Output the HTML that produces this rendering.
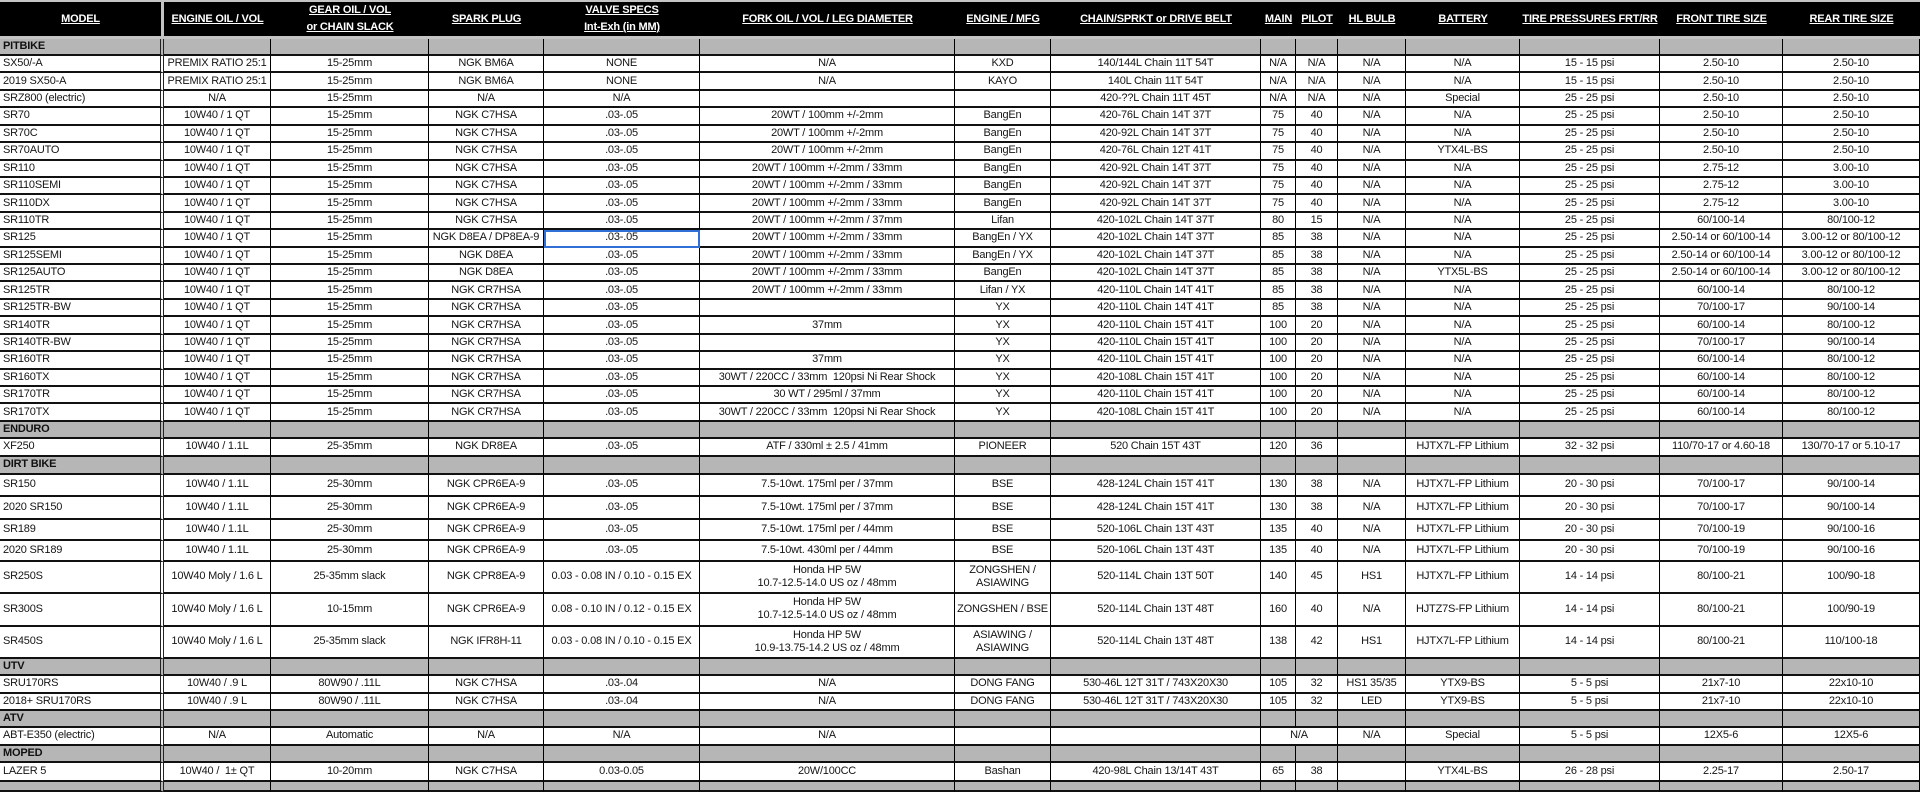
<!DOCTYPE html>
<html><head><meta charset="utf-8">
<style>
html,body{margin:0;padding:0;background:#fff;}
body{width:1920px;height:784px;overflow:hidden;font-family:"Liberation Sans",Arial,sans-serif;font-size:11px;color:#151515;letter-spacing:-0.2px;}
.g{display:grid;width:1920px;
grid-template-columns:164px 107px 158px 115px 156px 255px 96px 210px 35px 42px 68px 114px 140px 123px 137px;
grid-template-rows:39px 17px repeat(21,17.43px) 17px 18px 18px 22px 23px 21px 21px 32px 33px 32px 17px 18px 17px 17px 18px 17px 19px 10px;}
.r{display:contents}
.r>div{box-sizing:border-box;border-right:1px solid #000;border-bottom:2px solid #111;display:flex;align-items:center;justify-content:center;text-align:center;white-space:nowrap;overflow:hidden;line-height:13px;}
.r>div:first-child{justify-content:flex-start;padding-left:3px;border-right:4px double #222;}
.s>div{background:#b6b6b6;font-weight:bold;color:#111}
.h>div{background:#000;color:#fff;font-weight:bold;text-decoration:underline;border:none;border-top:2px solid #c4c4c4;border-bottom:3px solid #c4c4c4;line-height:17px;}
.h>div:first-child{justify-content:center;padding:0;border-right:3px solid #c4c4c4;}
.sel{outline:2px solid #2f6fd6;outline-offset:-2px}
.f>div{background:#b6b6b6}
</style></head><body>
<div class="g">
<div class="r h"><div>MODEL</div><div>ENGINE OIL / VOL</div><div>GEAR OIL / VOL<br>or CHAIN SLACK</div><div>SPARK PLUG</div><div>VALVE SPECS<br>Int-Exh (in MM)</div><div>FORK OIL / VOL / LEG DIAMETER</div><div>ENGINE / MFG</div><div>CHAIN/SPRKT or DRIVE BELT</div><div>MAIN</div><div>PILOT</div><div>HL BULB</div><div>BATTERY</div><div>TIRE PRESSURES FRT/RR</div><div>FRONT TIRE SIZE</div><div>REAR TIRE SIZE</div></div>

<div class="r s"><div>PITBIKE</div><div></div><div></div><div></div><div></div><div></div><div></div><div></div><div></div><div></div><div></div><div></div><div></div><div></div><div></div></div>
<div class="r"><div>SX50/-A</div><div>PREMIX RATIO 25:1</div><div>15-25mm</div><div>NGK BM6A</div><div>NONE</div><div>N/A</div><div>KXD</div><div>140/144L Chain 11T 54T</div><div>N/A</div><div>N/A</div><div>N/A</div><div>N/A</div><div>15 - 15 psi</div><div>2.50-10</div><div>2.50-10</div></div>
<div class="r"><div>2019 SX50-A</div><div>PREMIX RATIO 25:1</div><div>15-25mm</div><div>NGK BM6A</div><div>NONE</div><div>N/A</div><div>KAYO</div><div>140L Chain 11T 54T</div><div>N/A</div><div>N/A</div><div>N/A</div><div>N/A</div><div>15 - 15 psi</div><div>2.50-10</div><div>2.50-10</div></div>
<div class="r"><div>SRZ800 (electric)</div><div>N/A</div><div>15-25mm</div><div>N/A</div><div>N/A</div><div></div><div></div><div>420-??L Chain 11T 45T</div><div>N/A</div><div>N/A</div><div>N/A</div><div>Special</div><div>25 - 25 psi</div><div>2.50-10</div><div>2.50-10</div></div>
<div class="r"><div>SR70</div><div>10W40 / 1 QT</div><div>15-25mm</div><div>NGK C7HSA</div><div>.03-.05</div><div>20WT / 100mm +/-2mm</div><div>BangEn</div><div>420-76L Chain 14T 37T</div><div>75</div><div>40</div><div>N/A</div><div>N/A</div><div>25 - 25 psi</div><div>2.50-10</div><div>2.50-10</div></div>
<div class="r"><div>SR70C</div><div>10W40 / 1 QT</div><div>15-25mm</div><div>NGK C7HSA</div><div>.03-.05</div><div>20WT / 100mm +/-2mm</div><div>BangEn</div><div>420-92L Chain 14T 37T</div><div>75</div><div>40</div><div>N/A</div><div>N/A</div><div>25 - 25 psi</div><div>2.50-10</div><div>2.50-10</div></div>
<div class="r"><div>SR70AUTO</div><div>10W40 / 1 QT</div><div>15-25mm</div><div>NGK C7HSA</div><div>.03-.05</div><div>20WT / 100mm +/-2mm</div><div>BangEn</div><div>420-76L Chain 12T 41T</div><div>75</div><div>40</div><div>N/A</div><div>YTX4L-BS</div><div>25 - 25 psi</div><div>2.50-10</div><div>2.50-10</div></div>
<div class="r"><div>SR110</div><div>10W40 / 1 QT</div><div>15-25mm</div><div>NGK C7HSA</div><div>.03-.05</div><div>20WT / 100mm +/-2mm / 33mm</div><div>BangEn</div><div>420-92L Chain 14T 37T</div><div>75</div><div>40</div><div>N/A</div><div>N/A</div><div>25 - 25 psi</div><div>2.75-12</div><div>3.00-10</div></div>
<div class="r"><div>SR110SEMI</div><div>10W40 / 1 QT</div><div>15-25mm</div><div>NGK C7HSA</div><div>.03-.05</div><div>20WT / 100mm +/-2mm / 33mm</div><div>BangEn</div><div>420-92L Chain 14T 37T</div><div>75</div><div>40</div><div>N/A</div><div>N/A</div><div>25 - 25 psi</div><div>2.75-12</div><div>3.00-10</div></div>
<div class="r"><div>SR110DX</div><div>10W40 / 1 QT</div><div>15-25mm</div><div>NGK C7HSA</div><div>.03-.05</div><div>20WT / 100mm +/-2mm / 33mm</div><div>BangEn</div><div>420-92L Chain 14T 37T</div><div>75</div><div>40</div><div>N/A</div><div>N/A</div><div>25 - 25 psi</div><div>2.75-12</div><div>3.00-10</div></div>
<div class="r"><div>SR110TR</div><div>10W40 / 1 QT</div><div>15-25mm</div><div>NGK C7HSA</div><div>.03-.05</div><div>20WT / 100mm +/-2mm / 37mm</div><div>Lifan</div><div>420-102L Chain 14T 37T</div><div>80</div><div>15</div><div>N/A</div><div>N/A</div><div>25 - 25 psi</div><div>60/100-14</div><div>80/100-12</div></div>
<div class="r"><div>SR125</div><div>10W40 / 1 QT</div><div>15-25mm</div><div>NGK D8EA / DP8EA-9</div><div class="sel">.03-.05</div><div>20WT / 100mm +/-2mm / 33mm</div><div>BangEn / YX</div><div>420-102L Chain 14T 37T</div><div>85</div><div>38</div><div>N/A</div><div>N/A</div><div>25 - 25 psi</div><div>2.50-14 or 60/100-14</div><div>3.00-12 or 80/100-12</div></div>
<div class="r"><div>SR125SEMI</div><div>10W40 / 1 QT</div><div>15-25mm</div><div>NGK D8EA</div><div>.03-.05</div><div>20WT / 100mm +/-2mm / 33mm</div><div>BangEn / YX</div><div>420-102L Chain 14T 37T</div><div>85</div><div>38</div><div>N/A</div><div>N/A</div><div>25 - 25 psi</div><div>2.50-14 or 60/100-14</div><div>3.00-12 or 80/100-12</div></div>
<div class="r"><div>SR125AUTO</div><div>10W40 / 1 QT</div><div>15-25mm</div><div>NGK D8EA</div><div>.03-.05</div><div>20WT / 100mm +/-2mm / 33mm</div><div>BangEn</div><div>420-102L Chain 14T 37T</div><div>85</div><div>38</div><div>N/A</div><div>YTX5L-BS</div><div>25 - 25 psi</div><div>2.50-14 or 60/100-14</div><div>3.00-12 or 80/100-12</div></div>
<div class="r"><div>SR125TR</div><div>10W40 / 1 QT</div><div>15-25mm</div><div>NGK CR7HSA</div><div>.03-.05</div><div>20WT / 100mm +/-2mm / 33mm</div><div>Lifan / YX</div><div>420-110L Chain 14T 41T</div><div>85</div><div>38</div><div>N/A</div><div>N/A</div><div>25 - 25 psi</div><div>60/100-14</div><div>80/100-12</div></div>
<div class="r"><div>SR125TR-BW</div><div>10W40 / 1 QT</div><div>15-25mm</div><div>NGK CR7HSA</div><div>.03-.05</div><div></div><div>YX</div><div>420-110L Chain 14T 41T</div><div>85</div><div>38</div><div>N/A</div><div>N/A</div><div>25 - 25 psi</div><div>70/100-17</div><div>90/100-14</div></div>
<div class="r"><div>SR140TR</div><div>10W40 / 1 QT</div><div>15-25mm</div><div>NGK CR7HSA</div><div>.03-.05</div><div>37mm</div><div>YX</div><div>420-110L Chain 15T 41T</div><div>100</div><div>20</div><div>N/A</div><div>N/A</div><div>25 - 25 psi</div><div>60/100-14</div><div>80/100-12</div></div>
<div class="r"><div>SR140TR-BW</div><div>10W40 / 1 QT</div><div>15-25mm</div><div>NGK CR7HSA</div><div>.03-.05</div><div></div><div>YX</div><div>420-110L Chain 15T 41T</div><div>100</div><div>20</div><div>N/A</div><div>N/A</div><div>25 - 25 psi</div><div>70/100-17</div><div>90/100-14</div></div>
<div class="r"><div>SR160TR</div><div>10W40 / 1 QT</div><div>15-25mm</div><div>NGK CR7HSA</div><div>.03-.05</div><div>37mm</div><div>YX</div><div>420-110L Chain 15T 41T</div><div>100</div><div>20</div><div>N/A</div><div>N/A</div><div>25 - 25 psi</div><div>60/100-14</div><div>80/100-12</div></div>
<div class="r"><div>SR160TX</div><div>10W40 / 1 QT</div><div>15-25mm</div><div>NGK CR7HSA</div><div>.03-.05</div><div>30WT / 220CC / 33mm&nbsp; 120psi Ni Rear Shock</div><div>YX</div><div>420-108L Chain 15T 41T</div><div>100</div><div>20</div><div>N/A</div><div>N/A</div><div>25 - 25 psi</div><div>60/100-14</div><div>80/100-12</div></div>
<div class="r"><div>SR170TR</div><div>10W40 / 1 QT</div><div>15-25mm</div><div>NGK CR7HSA</div><div>.03-.05</div><div>30 WT / 295ml / 37mm</div><div>YX</div><div>420-110L Chain 15T 41T</div><div>100</div><div>20</div><div>N/A</div><div>N/A</div><div>25 - 25 psi</div><div>60/100-14</div><div>80/100-12</div></div>
<div class="r"><div>SR170TX</div><div>10W40 / 1 QT</div><div>15-25mm</div><div>NGK CR7HSA</div><div>.03-.05</div><div>30WT / 220CC / 33mm&nbsp; 120psi Ni Rear Shock</div><div>YX</div><div>420-108L Chain 15T 41T</div><div>100</div><div>20</div><div>N/A</div><div>N/A</div><div>25 - 25 psi</div><div>60/100-14</div><div>80/100-12</div></div>

<div class="r s"><div>ENDURO</div><div></div><div></div><div></div><div></div><div></div><div></div><div></div><div></div><div></div><div></div><div></div><div></div><div></div><div></div></div>
<div class="r"><div>XF250</div><div>10W40 / 1.1L</div><div>25-35mm</div><div>NGK DR8EA</div><div>.03-.05</div><div>ATF / 330ml ± 2.5 / 41mm</div><div>PIONEER</div><div>520 Chain 15T 43T</div><div>120</div><div>36</div><div></div><div>HJTX7L-FP Lithium</div><div>32 - 32 psi</div><div>110/70-17 or 4.60-18</div><div>130/70-17 or 5.10-17</div></div>

<div class="r s"><div>DIRT BIKE</div><div></div><div></div><div></div><div></div><div></div><div></div><div></div><div></div><div></div><div></div><div></div><div></div><div></div><div></div></div>
<div class="r"><div>SR150</div><div>10W40 / 1.1L</div><div>25-30mm</div><div>NGK CPR6EA-9</div><div>.03-.05</div><div>7.5-10wt. 175ml per / 37mm</div><div>BSE</div><div>428-124L Chain 15T 41T</div><div>130</div><div>38</div><div>N/A</div><div>HJTX7L-FP Lithium</div><div>20 - 30 psi</div><div>70/100-17</div><div>90/100-14</div></div>
<div class="r"><div>2020 SR150</div><div>10W40 / 1.1L</div><div>25-30mm</div><div>NGK CPR6EA-9</div><div>.03-.05</div><div>7.5-10wt. 175ml per / 37mm</div><div>BSE</div><div>428-124L Chain 15T 41T</div><div>130</div><div>38</div><div>N/A</div><div>HJTX7L-FP Lithium</div><div>20 - 30 psi</div><div>70/100-17</div><div>90/100-14</div></div>
<div class="r"><div>SR189</div><div>10W40 / 1.1L</div><div>25-30mm</div><div>NGK CPR6EA-9</div><div>.03-.05</div><div>7.5-10wt. 175ml per / 44mm</div><div>BSE</div><div>520-106L Chain 13T 43T</div><div>135</div><div>40</div><div>N/A</div><div>HJTX7L-FP Lithium</div><div>20 - 30 psi</div><div>70/100-19</div><div>90/100-16</div></div>
<div class="r"><div>2020 SR189</div><div>10W40 / 1.1L</div><div>25-30mm</div><div>NGK CPR6EA-9</div><div>.03-.05</div><div>7.5-10wt. 430ml per / 44mm</div><div>BSE</div><div>520-106L Chain 13T 43T</div><div>135</div><div>40</div><div>N/A</div><div>HJTX7L-FP Lithium</div><div>20 - 30 psi</div><div>70/100-19</div><div>90/100-16</div></div>
<div class="r"><div>SR250S</div><div>10W40 Moly / 1.6 L</div><div>25-35mm slack</div><div>NGK CPR8EA-9</div><div>0.03 - 0.08 IN / 0.10 - 0.15 EX</div><div>Honda HP 5W<br>10.7-12.5-14.0 US oz / 48mm</div><div>ZONGSHEN /<br>ASIAWING</div><div>520-114L Chain 13T 50T</div><div>140</div><div>45</div><div>HS1</div><div>HJTX7L-FP Lithium</div><div>14 - 14 psi</div><div>80/100-21</div><div>100/90-18</div></div>
<div class="r"><div>SR300S</div><div>10W40 Moly / 1.6 L</div><div>10-15mm</div><div>NGK CPR6EA-9</div><div>0.08 - 0.10 IN / 0.12 - 0.15 EX</div><div>Honda HP 5W<br>10.7-12.5-14.0 US oz / 48mm</div><div>ZONGSHEN / BSE</div><div>520-114L Chain 13T 48T</div><div>160</div><div>40</div><div>N/A</div><div>HJTZ7S-FP Lithium</div><div>14 - 14 psi</div><div>80/100-21</div><div>100/90-19</div></div>
<div class="r"><div>SR450S</div><div>10W40 Moly / 1.6 L</div><div>25-35mm slack</div><div>NGK IFR8H-11</div><div>0.03 - 0.08 IN / 0.10 - 0.15 EX</div><div>Honda HP 5W<br>10.9-13.75-14.2 US oz / 48mm</div><div>ASIAWING /<br>ASIAWING</div><div>520-114L Chain 13T 48T</div><div>138</div><div>42</div><div>HS1</div><div>HJTX7L-FP Lithium</div><div>14 - 14 psi</div><div>80/100-21</div><div>110/100-18</div></div>

<div class="r s"><div>UTV</div><div></div><div></div><div></div><div></div><div></div><div></div><div></div><div></div><div></div><div></div><div></div><div></div><div></div><div></div></div>
<div class="r"><div>SRU170RS</div><div>10W40 / .9 L</div><div>80W90 / .11L</div><div>NGK C7HSA</div><div>.03-.04</div><div>N/A</div><div>DONG FANG</div><div>530-46L 12T 31T / 743X20X30</div><div>105</div><div>32</div><div>HS1 35/35</div><div>YTX9-BS</div><div>5 - 5 psi</div><div>21x7-10</div><div>22x10-10</div></div>
<div class="r"><div>2018+ SRU170RS</div><div>10W40 / .9 L</div><div>80W90 / .11L</div><div>NGK C7HSA</div><div>.03-.04</div><div>N/A</div><div>DONG FANG</div><div>530-46L 12T 31T / 743X20X30</div><div>105</div><div>32</div><div>LED</div><div>YTX9-BS</div><div>5 - 5 psi</div><div>21x7-10</div><div>22x10-10</div></div>

<div class="r s"><div>ATV</div><div></div><div></div><div></div><div></div><div></div><div></div><div></div><div></div><div></div><div></div><div></div><div></div><div></div><div></div></div>
<div class="r"><div>ABT-E350 (electric)</div><div>N/A</div><div>Automatic</div><div>N/A</div><div>N/A</div><div>N/A</div><div></div><div></div><div style="grid-column:span 2">N/A</div><div>N/A</div><div>Special</div><div>5 - 5 psi</div><div>12X5-6</div><div>12X5-6</div></div>

<div class="r s"><div>MOPED</div><div></div><div></div><div></div><div></div><div></div><div></div><div></div><div></div><div></div><div></div><div></div><div></div><div></div><div></div></div>
<div class="r"><div>LAZER 5</div><div>10W40 /&nbsp; 1± QT</div><div>10-20mm</div><div>NGK C7HSA</div><div>0.03-0.05</div><div>20W/100CC</div><div>Bashan</div><div>420-98L Chain 13/14T 43T</div><div>65</div><div>38</div><div></div><div>YTX4L-BS</div><div>26 - 28 psi</div><div>2.25-17</div><div>2.50-17</div></div>
<div class="r f"><div></div><div></div><div></div><div></div><div></div><div></div><div></div><div></div><div></div><div></div><div></div><div></div><div></div><div></div><div></div></div>
</div>
</body></html>
